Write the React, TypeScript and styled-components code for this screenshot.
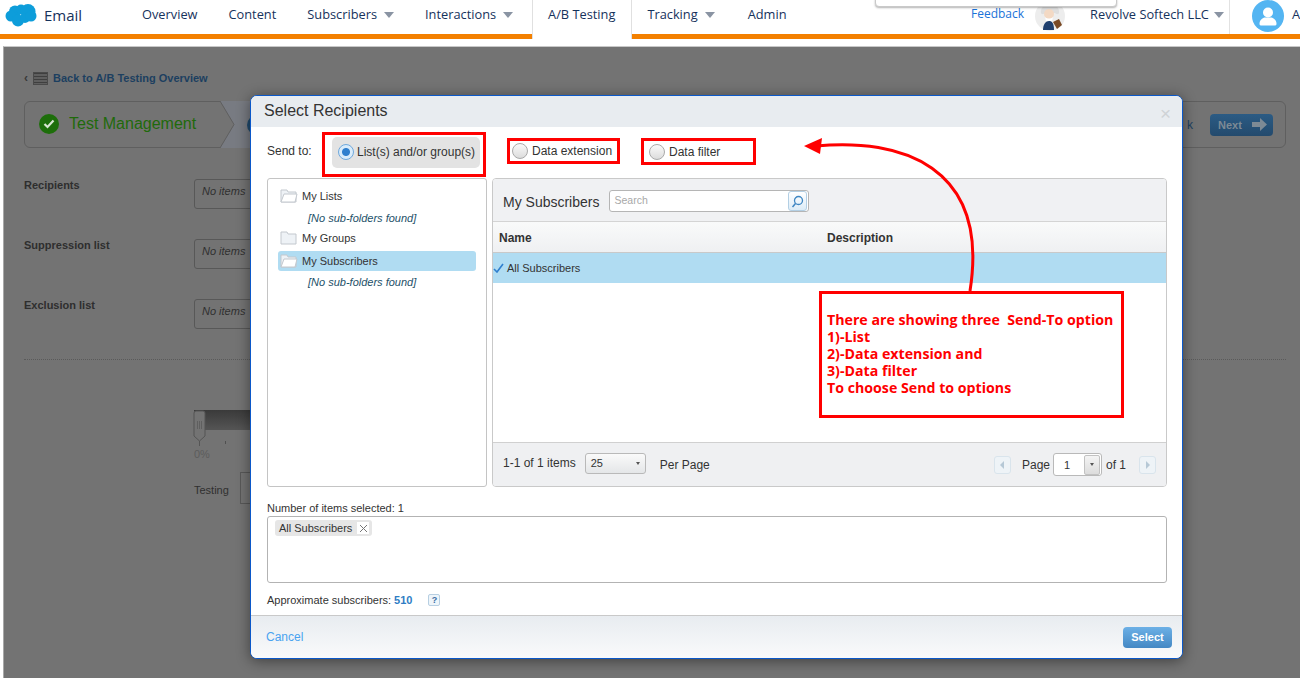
import React from "react";
import styled, { createGlobalStyle } from "styled-components";

const GlobalStyle = createGlobalStyle`
  html, body {
    margin: 0;
    padding: 0;
    background: #fff;
  }
  body {
    font-family: "Liberation Sans", Arial, sans-serif;
    overflow: hidden;
  }
`;

const CloudLogo = () => (
  <svg width="32" height="24" viewBox="0 0 32 24">
    <g fill="#0d9dda">
      <circle cx="10" cy="8.500" r="6" />
      <circle cx="16" cy="6.500" r="5" />
      <circle cx="23" cy="8.500" r="7.500" />
      <circle cx="6" cy="13" r="5.500" />
      <circle cx="13" cy="17.500" r="6" />
      <circle cx="20" cy="15" r="5" />
      <circle cx="26" cy="13" r="5.500" />
    </g>
  </svg>
);

const Einstein = () => (
  <svg width="30" height="30" viewBox="0 0 30 30">
    <circle cx="15" cy="15" r="15" fill="#ededed" />
    <path d="M6 12c-1-6 5-9 9-9s10 3 9 9c-1 2-3 1-4 0H10c-1 1-3 2-4 0z" fill="#dedede" />
    <circle cx="14" cy="13" r="5" fill="#f3d9c4" />
    <path d="M10 16c2 2 6 2 8 0l-1 4h-6z" fill="#fff" />
    <path d="M8 29c0-6 3-9 6-9s5 2 5 9z" fill="#1f3f6e" />
    <path d="M18 21l6-3 3 6-5 4z" fill="#7a4a25" />
  </svg>
);

const UserAvatar = () => (
  <svg width="32" height="32" viewBox="0 0 32 32">
    <circle cx="16" cy="16" r="16" fill="#54b5f2" />
    <circle cx="16" cy="12.500" r="5" fill="#fff" />
    <path d="M7.500 24c0-4 3-6 5-6.500h7c2 .5 5 2.500 5 6.500 0 1-1 1.500-2 1.500H9.500c-1 0-2-.5-2-1.500z" fill="#fff" />
  </svg>
);

const FolderIcon = ({ open }: { open?: boolean }) => (
  <svg width="18" height="14" viewBox="0 0 18 14">
    <path d="M1 1h6l1 2h8v10H1z" fill="#eef2f6" stroke="#c3c8ce" />
    {open && <path d="M1 13l3-8h13l-2 8z" fill="#fff" stroke="#c3c8ce" />}
  </svg>
);

const Page = styled.div`
  position: relative;
  width: 1300px;
  height: 678px;
  overflow: hidden;
  background: #fff;
`;

const NavBar = styled.header`
  position: relative;
  display: flex;
  align-items: flex-start;
  height: 34px;
  border-bottom: 5px solid #f38000;
  background: #fff;
`;

const Brand = styled.div`
  display: flex;
  align-items: center;
  width: 126.500px;
  height: 30px;
  padding-left: 5px;
  box-sizing: border-box;
  gap: 7px;
  font-family: "Open Sans", sans-serif;
  font-size: 15px;
  color: #16325c;
`;

const NavItem = styled.div<{ $active?: boolean }>`
  display: flex;
  align-items: center;
  box-sizing: border-box;
  height: ${({ $active }) => ($active ? "39px" : "27px")};
  padding: 0 15.500px;
  font-family: "Open Sans", sans-serif;
  font-size: 12.8px;
  color: #16325c;
  white-space: nowrap;
  ${({ $active }) =>
    $active &&
    `
    background: #fff;
    border-left: 1px solid #e0e0e0;
    border-right: 1px solid #e0e0e0;
    padding-bottom: 12px;
    margin: 0 0 -5px 3px;
    position: relative;
  `}
`;

const AdminItem = styled(NavItem)`
  margin-left: 2px;
`;

const Caret = styled.span`
  display: inline-block;
  width: 0;
  height: 0;
  margin-left: 7px;
  margin-top: 2px;
  border-left: 5.500px solid transparent;
  border-right: 5.500px solid transparent;
  border-top: 6px solid #8a94a3;
`;

const NavRight = styled.div`
  position: absolute;
  left: 971px;
  right: 0;
  top: 0;
  display: flex;
  align-items: flex-start;
  height: 34px;
`;

const Feedback = styled.a`
  line-height: 28px;
  font-family: "Open Sans", sans-serif;
  font-size: 12px;
  color: #1a72d8;
  margin-right: 11px;
`;

const AvatarSlot = styled.div`
  height: 30px;
  margin-top: 1px;
`;

const Org = styled.div`
  display: flex;
  align-items: center;
  height: 27px;
  margin-left: 25px;
  width: 141px;
  font-family: "Open Sans", sans-serif;
  font-size: 12.8px;
  color: #16325c;
  white-space: nowrap;
`;

const OrgCaret = styled(Caret)`
  margin-left: 5px;
`;

const UserBlock = styled.div`
  display: flex;
  align-items: flex-start;
  gap: 8px;
  height: 34px;
  padding-left: 22px;
  border-left: 1px solid #e2e2e2;
  font-family: "Open Sans", sans-serif;
  font-size: 12.8px;
  color: #16325c;
  line-height: 28px;
`;

const TopPopup = styled.div`
  position: absolute;
  left: 875px;
  top: -4px;
  width: 240px;
  height: 9px;
  background: #fff;
  border: 1px solid #c9c9c9;
  border-radius: 4px;
  box-shadow: 0 1px 2px rgba(0, 0, 0, 0.3);
`;

const Backdrop = styled.main`
  position: absolute;
  left: 3px;
  right: 0;
  top: 46px;
  bottom: 0;
  padding: 24px 14px 0 20px;
  background: #737373;
  border-top: 1px solid #c8c8c8;
  border-left: 1px solid #a8a8a8;
  color: #333;
`;

const BackLink = styled.div`
  display: flex;
  align-items: center;
  gap: 5px;
  height: 14px;
  font-size: 11px;
  font-weight: bold;
  color: #1c3f60;
`;

const Chevron = styled.span`
  width: 4px;
  font-size: 12px;
  color: #3a3a3a;
`;

const ListGlyph = styled.span`
  display: inline-block;
  width: 15px;
  height: 13px;
  background: repeating-linear-gradient(#3f3f3f 0 1px, #5f5f5f 1px 3px);
  border: 1px solid #4a4a4a;
  box-sizing: border-box;
`;

const Steps = styled.div`
  position: relative;
  display: flex;
  align-items: center;
  justify-content: space-between;
  box-sizing: border-box;
  height: 47px;
  margin-top: 16px;
  padding: 0 12px 0 14px;
  border: 1px solid #5f5f5f;
  border-radius: 6px;
`;

const StepDone = styled.div`
  display: flex;
  align-items: center;
  gap: 10px;
  margin-bottom: 1px;
  font-size: 16px;
  color: #1f6a0b;
`;

const DoneMark = styled.span`
  display: flex;
  align-items: center;
  justify-content: center;
  width: 20px;
  height: 20px;
  border-radius: 50%;
  background: #1d6e0a;
`;

const StepArrow = styled.svg`
  position: absolute;
  left: 195px;
  top: -1px;
`;

const NextWrap = styled.div`
  display: flex;
  align-items: center;
  gap: 17px;
  font-size: 12px;
  color: #1c3f60;
`;

const NextButton = styled.div`
  display: flex;
  align-items: center;
  gap: 10px;
  box-sizing: border-box;
  width: 63px;
  height: 22px;
  padding-left: 8px;
  border-radius: 4px;
  background: linear-gradient(#2b5b84, #234a6d);
  color: #7d8a95;
  font-size: 11px;
  font-weight: bold;
`;

const FieldRow = styled.div`
  display: flex;
  align-items: flex-start;
  height: 60px;
`;

const FieldLabel = styled.div`
  width: 170px;
  font-size: 11px;
  font-weight: bold;
  color: #2e2e2e;
`;

const FieldBox = styled.div`
  box-sizing: border-box;
  width: 200px;
  height: 30px;
  padding: 5px 7px;
  border: 1px solid #585858;
  border-radius: 3px;
  font-size: 11px;
  font-style: italic;
  color: #303030;
`;

const Fields = styled.div`
  margin-top: 31px;
`;

const Dotted = styled.div`
  height: 0;
  border-top: 1px dotted #5a5a5a;
`;

const SliderArea = styled.div`
  position: relative;
  margin: 50px 0 0 170px;
  height: 95px;
`;

const SliderTrack = styled.div`
  width: 100px;
  height: 20px;
  margin-top: 3px;
  background: linear-gradient(#3a3a3a, #555);
`;

const SliderHandle = styled.svg`
  position: absolute;
  left: -1px;
  top: 0;
`;

const SliderTick = styled.span`
  position: absolute;
  left: 31px;
  top: 31px;
  width: 1px;
  height: 3px;
  background: #505050;
`;

const ZeroLabel = styled.div`
  margin-top: 18px;
  font-size: 11px;
  color: #5c5c5c;
`;

const TestingRow = styled.div`
  display: flex;
  align-items: center;
  gap: 11px;
  margin-top: 12px;
  font-size: 11px;
  color: #303030;
`;

const TestingLabel = styled.span`
  padding-top: 4px;
`;

const TestingBox = styled.div`
  width: 40px;
  height: 30px;
  border: 1px solid #585858;
`;

const Dialog = styled.section`
  position: absolute;
  left: 250px;
  top: 95px;
  display: flex;
  flex-direction: column;
  box-sizing: border-box;
  width: 933px;
  height: 564px;
  background: #fff;
  border: 1px solid #0b58c9;
  border-radius: 7px;
  box-shadow: 0 2px 14px rgba(0, 0, 0, 0.45);
  overflow: hidden;
  color: #333;
`;

const DialogHead = styled.div`
  display: flex;
  align-items: center;
  justify-content: space-between;
  flex: none;
  box-sizing: border-box;
  height: 31px;
  padding: 0 11px 2px 13px;
  background: #e8ecf0;
  font-size: 16px;
  color: #333;
`;

const CloseX = styled.span`
  margin-top: 6px;
  font-size: 19px;
  color: #cfd3d6;
`;

const SendRow = styled.div`
  display: flex;
  align-items: flex-start;
  flex: none;
  height: 51px;
  padding: 5px 0 0 16px;
  box-sizing: border-box;
`;

const SendLabel = styled.div`
  width: 55px;
  padding-top: 12px;
  line-height: 14px;
  font-size: 12px;
`;

const RedBox = styled.div<{ $w: number; $h: number; $top?: number; $pad?: number }>`
  display: flex;
  align-items: center;
  box-sizing: border-box;
  width: ${({ $w }) => $w}px;
  height: ${({ $h }) => $h}px;
  margin-top: ${({ $top }) => $top || 0}px;
  margin-right: 21px;
  padding-left: ${({ $pad }) => $pad || 0}px;
  border: 3px solid #f00;
`;

const ActiveOption = styled.div`
  position: relative;
  display: flex;
  align-items: center;
  gap: 3px;
  box-sizing: border-box;
  width: 148px;
  height: 31px;
  margin-left: 7px;
  margin-top: -4px;
  padding: 0 0 2px 6px;
  border-radius: 5px;
  background: #e3e3e3;
  font-size: 12px;
  white-space: nowrap;
  &::after {
    content: "";
    position: absolute;
    left: 68px;
    bottom: -4px;
    width: 8px;
    height: 8px;
    background: #e9e9e9;
    transform: rotate(45deg);
    z-index: -1;
  }
`;

const PlainOption = styled.div`
  display: flex;
  align-items: center;
  gap: 4px;
  font-size: 12px;
  white-space: nowrap;
`;

const Radio = styled.span<{ $on?: boolean }>`
  display: inline-block;
  box-sizing: border-box;
  width: 16px;
  height: 16px;
  border-radius: 50%;
  border: 1px solid ${({ $on }) => ($on ? "#6fa9dd" : "#a9a9a9")};
  background: ${({ $on }) =>
    $on
      ? "radial-gradient(circle, #2f7fce 0 3.5px, #d9ecfb 4.5px)"
      : "linear-gradient(#fafafa, #dcdcdc)"};
`;

const Panels = styled.div`
  display: flex;
  flex: none;
  gap: 5px;
  height: 309px;
  padding: 0 15px 0 16px;
`;

const Tree = styled.div`
  display: flex;
  flex-direction: column;
  flex: none;
  box-sizing: border-box;
  width: 220px;
  padding: 7px 10px 0 10px;
  border: 1px solid #c4c4c4;
  border-radius: 3px;
`;

const TreeRow = styled.div<{ $selected?: boolean; $gap?: number }>`
  display: flex;
  align-items: center;
  gap: 4px;
  flex: none;
  height: 20px;
  margin-top: ${({ $gap }) => $gap || 0}px;
  padding-left: 2px;
  border-radius: 3px;
  background: ${({ $selected }) => ($selected ? "#b0dcf2" : "transparent")};
  font-size: 11px;
  color: #333;
`;

const TreeEmpty = styled.div<{ $gap?: number }>`
  flex: none;
  height: 20px;
  line-height: 20px;
  margin-top: ${({ $gap }) => $gap || 0}px;
  padding-left: 30px;
  font-size: 11px;
  font-style: italic;
  color: #1c5068;
`;

const GridPanel = styled.div`
  display: flex;
  flex-direction: column;
  flex: 1;
  border: 1px solid #c9c9c9;
  border-radius: 4px;
  overflow: hidden;
`;

const GridTools = styled.div`
  display: flex;
  align-items: center;
  gap: 10px;
  flex: none;
  height: 43px;
  padding: 2px 0 0 10px;
  box-sizing: border-box;
  border-bottom: 1px solid #d4d4d4;
  background: #f0f1f3;
  font-size: 14px;
`;

const GridTitle = styled.span`
  padding-top: 2px;
`;

const SearchBox = styled.div`
  display: flex;
  align-items: center;
  justify-content: space-between;
  box-sizing: border-box;
  width: 200px;
  height: 22px;
  padding: 0 1px 0 4px;
  background: #fff;
  border: 1px solid #b5b5b5;
  border-radius: 3px;
  font-size: 10.5px;
  color: #a8a8a8;
`;

const SearchHint = styled.span`
  margin-top: -2px;
`;

const SearchButton = styled.span`
  display: flex;
  align-items: center;
  justify-content: center;
  width: 17px;
  height: 18px;
  border: 1px solid #b3cfe4;
  border-radius: 3px;
  background: linear-gradient(#fff, #dcecf7);
`;

const GridHead = styled.div`
  display: flex;
  align-items: center;
  flex: none;
  box-sizing: border-box;
  height: 31px;
  padding: 1px 0 0 6px;
  border-bottom: 1px solid #c9c9c9;
  background: linear-gradient(#f9fafa, #eff0f2);
  font-size: 12px;
  font-weight: bold;
`;

const NameColumn = styled.div`
  width: 328px;
`;

const GridSelected = styled.div`
  display: flex;
  align-items: center;
  gap: 3px;
  flex: none;
  height: 30px;
  background: #b0dcf2;
  font-size: 11px;
`;

const GridSpace = styled.div`
  flex: 1;
`;

const GridFoot = styled.div`
  display: flex;
  align-items: center;
  flex: none;
  box-sizing: border-box;
  height: 44px;
  padding: 0 10px;
  border-top: 1px solid #d0d0d0;
  background: #eff0f2;
  font-size: 12px;
`;

const ItemCount = styled.span`
  margin-bottom: 3px;
`;

const PerPage = styled.div`
  display: flex;
  align-items: center;
  justify-content: space-between;
  box-sizing: border-box;
  width: 61px;
  height: 21px;
  margin: 0 14px 3px 9px;
  padding: 0 5px;
  border: 1px solid #b9b9b9;
  border-radius: 3px;
  background: linear-gradient(#fafafa, #e4e6e8);
  font-size: 11px;
`;

const MiniCaret = styled.span`
  display: inline-block;
  width: 0;
  height: 0;
  border-left: 2.500px solid transparent;
  border-right: 2.500px solid transparent;
  border-top: 3px solid #555;
`;

const Pager = styled.div`
  display: flex;
  align-items: center;
  margin-left: auto;
`;

const PageArrow = styled.span<{ $dir: "left" | "right" }>`
  display: flex;
  align-items: center;
  justify-content: center;
  box-sizing: border-box;
  width: 17px;
  height: 18px;
  border: 1px solid #d9e4ec;
  border-radius: 3px;
  background: #eef3f7;
  &::before {
    content: "";
    border-top: 4px solid transparent;
    border-bottom: 4px solid transparent;
    ${({ $dir }) =>
      $dir === "left" ? "border-right: 4px solid #b6c8d6;" : "border-left: 4px solid #b6c8d6;"}
  }
`;

const PageLabel = styled.span`
  margin: 0 3px 0 11px;
`;

const PageInput = styled.div`
  display: flex;
  align-items: center;
  justify-content: space-between;
  box-sizing: border-box;
  width: 49px;
  height: 23px;
  padding: 0 1px 0 10px;
  border: 1px solid #b9b9b9;
  border-radius: 3px;
  background: #fff;
  font-size: 11px;
`;

const PageDrop = styled.span`
  display: flex;
  align-items: center;
  justify-content: center;
  width: 14px;
  height: 18px;
  border: 1px solid #c2c2c2;
  border-radius: 2px;
  background: linear-gradient(#f4f4f4, #dcdcdc);
`;

const PageOf = styled.span`
  margin: 0 13px 0 4px;
`;

const SelectedLabel = styled.div`
  flex: none;
  margin: 15px 0 0 16px;
  line-height: 13px;
  font-size: 11px;
`;

const SelectedBox = styled.div`
  display: flex;
  align-items: flex-start;
  flex: none;
  box-sizing: border-box;
  height: 67px;
  margin: 1px 15px 0 16px;
  padding: 3px 7px;
  border: 1px solid #b3b3b3;
  border-radius: 3px;
`;

const Chip = styled.div`
  display: flex;
  align-items: center;
  gap: 5px;
  height: 16px;
  padding: 0 3px 0 4px;
  border-radius: 3px;
  background: #e6e6e6;
  font-size: 11px;
`;

const ChipClose = styled.span`
  display: flex;
  align-items: center;
  justify-content: center;
  width: 12px;
  height: 12px;
  background: #fff;
`;

const ApproxRow = styled.div`
  display: flex;
  align-items: center;
  flex: none;
  height: 16px;
  margin: 9px 0 0 16px;
  font-size: 11px;
`;

const ApproxCount = styled.strong`
  margin: 0 16px 0 3px;
  color: #2e7dc4;
`;

const HelpMark = styled.span`
  display: flex;
  align-items: center;
  justify-content: center;
  box-sizing: border-box;
  width: 12px;
  height: 12px;
  border: 1px solid #b7cfe2;
  border-radius: 2px;
  background: #eef5fa;
  font-size: 9px;
  font-weight: bold;
  color: #3a6ea5;
`;

const DialogFoot = styled.div`
  display: flex;
  align-items: center;
  justify-content: space-between;
  margin-top: auto;
  box-sizing: border-box;
  height: 43px;
  padding: 0 10px 0 15px;
  border-top: 1px solid #c9c9c9;
  background: linear-gradient(#e8ecf0, #f9fafb);
`;

const CancelLink = styled.a`
  font-size: 12px;
  color: #4aa3f0;
`;

const SelectButton = styled.div`
  display: flex;
  align-items: center;
  justify-content: center;
  width: 49px;
  height: 21px;
  border-radius: 4px;
  background: linear-gradient(#6cb0e6, #4488c4);
  font-size: 11px;
  font-weight: bold;
  color: #fff;
`;

const Callout = styled.div`
  position: absolute;
  left: 819px;
  top: 291px;
  box-sizing: border-box;
  width: 305px;
  height: 127px;
  padding: 17px 0 0 5px;
  border: 3px solid #f00;
  background: #fff;
  font-family: "Open Sans", sans-serif;
  font-size: 14.2px;
  font-weight: 700;
  line-height: 17px;
  color: #f00;
  white-space: pre;
`;

const ArrowOverlay = styled.svg`
  position: absolute;
  left: 790px;
  top: 130px;
  pointer-events: none;
`;

const App = () => {
  return (
    <Page>
      <GlobalStyle />
      <NavBar>
        <Brand>
          <CloudLogo />
          Email
        </Brand>
        <NavItem>Overview</NavItem>
        <NavItem>Content</NavItem>
        <NavItem>
          Subscribers
          <Caret />
        </NavItem>
        <NavItem>
          Interactions
          <Caret />
        </NavItem>
        <NavItem $active>A/B Testing</NavItem>
        <NavItem>
          Tracking
          <Caret />
        </NavItem>
        <AdminItem>Admin</AdminItem>
        <NavRight>
          <Feedback>Feedback</Feedback>
          <AvatarSlot>
            <Einstein />
          </AvatarSlot>
          <Org>
            Revolve Softech LLC
            <OrgCaret />
          </Org>
          <UserBlock>
            <UserAvatar />A
          </UserBlock>
        </NavRight>
        <TopPopup />
      </NavBar>

      <Backdrop>
        <BackLink>
          <Chevron>‹</Chevron>
          <ListGlyph />
          Back to A/B Testing Overview
        </BackLink>
        <Steps>
          <StepDone>
            <DoneMark>
              <svg width="12" height="10" viewBox="0 0 12 10">
                <path d="M1.500 5l3 3 6-6.500" fill="none" stroke="#d8e6d2" strokeWidth="2.200" />
              </svg>
            </DoneMark>
            Test Management
          </StepDone>
          <StepArrow width="60" height="47" viewBox="0 0 60 47">
            <path d="M0 0h60v47H0l14-23.500z" fill="#787b82" />
            <path d="M0 0l14 23.500L0 47" fill="none" stroke="#5f5f5f" />
            <circle cx="37" cy="24" r="10" fill="#1f4a6e" />
          </StepArrow>
          <NextWrap>
            <span>k</span>
            <NextButton>
              Next
              <svg width="15" height="13" viewBox="0 0 15 13">
                <path d="M0 4h8V0l7 6.500L8 13V9H0z" fill="#7d8a95" />
              </svg>
            </NextButton>
          </NextWrap>
        </Steps>
        <Fields>
          <FieldRow>
            <FieldLabel>Recipients</FieldLabel>
            <FieldBox>No items</FieldBox>
          </FieldRow>
          <FieldRow>
            <FieldLabel>Suppression list</FieldLabel>
            <FieldBox>No items</FieldBox>
          </FieldRow>
          <FieldRow>
            <FieldLabel>Exclusion list</FieldLabel>
            <FieldBox>No items</FieldBox>
          </FieldRow>
        </Fields>
        <Dotted />
        <SliderArea>
          <SliderTrack />
          <SliderHandle width="14" height="36" viewBox="0 0 14 36">
            <path d="M1 3q0-2 2-2h7q2 0 2 2v23l-5.500 5L1 26z" fill="#737373" stroke="#555" />
            <path d="M6.500 31v5" stroke="#555" />
            <path d="M4 12h6M4 14h6M4 16h6M4 18h6" stroke="#4d4d4d" strokeDasharray="1 1" />
          </SliderHandle>
          <SliderTick />
          <ZeroLabel>0%</ZeroLabel>
          <TestingRow>
            <TestingLabel>Testing</TestingLabel>
            <TestingBox />
          </TestingRow>
        </SliderArea>
      </Backdrop>

      <Dialog>
        <DialogHead>
          Select Recipients
          <CloseX>×</CloseX>
        </DialogHead>
        <SendRow>
          <SendLabel>Send to:</SendLabel>
          <RedBox $w={164} $h={45}>
            <ActiveOption>
              <Radio $on />
              List(s) and/or group(s)
            </ActiveOption>
          </RedBox>
          <RedBox $w={113} $h={26} $top={6} $pad={2}>
            <PlainOption>
              <Radio />
              Data extension
            </PlainOption>
          </RedBox>
          <RedBox $w={115} $h={27} $top={6} $pad={5}>
            <PlainOption>
              <Radio />
              Data filter
            </PlainOption>
          </RedBox>
        </SendRow>
        <Panels>
          <Tree>
            <TreeRow>
              <FolderIcon open />
              My Lists
            </TreeRow>
            <TreeEmpty $gap={2}>[No sub-folders found]</TreeEmpty>
            <TreeRow>
              <FolderIcon />
              My Groups
            </TreeRow>
            <TreeRow $selected $gap={3}>
              <FolderIcon open />
              My Subscribers
            </TreeRow>
            <TreeEmpty $gap={1}>[No sub-folders found]</TreeEmpty>
          </Tree>
          <GridPanel>
            <GridTools>
              <GridTitle>My Subscribers</GridTitle>
              <SearchBox>
                <SearchHint>Search</SearchHint>
                <SearchButton>
                  <svg width="13" height="13" viewBox="0 0 13 13">
                    <circle cx="7.500" cy="5.500" r="4" fill="none" stroke="#3f86c2" strokeWidth="1.300" />
                    <path d="M4.500 8.500L1.500 12" stroke="#3f86c2" strokeWidth="1.500" />
                  </svg>
                </SearchButton>
              </SearchBox>
            </GridTools>
            <GridHead>
              <NameColumn>Name</NameColumn>
              Description
            </GridHead>
            <GridSelected>
              <svg width="11" height="10" viewBox="0 0 11 10">
                <path d="M1 6l3 3 6-8" fill="none" stroke="#2f7fce" strokeWidth="1.600" />
              </svg>
              All Subscribers
            </GridSelected>
            <GridSpace />
            <GridFoot>
              <ItemCount>1-1 of 1 items</ItemCount>
              <PerPage>
                25
                <MiniCaret />
              </PerPage>
              Per Page
              <Pager>
                <PageArrow $dir="left" />
                <PageLabel>Page</PageLabel>
                <PageInput>
                  1
                  <PageDrop>
                    <MiniCaret />
                  </PageDrop>
                </PageInput>
                <PageOf>of 1</PageOf>
                <PageArrow $dir="right" />
              </Pager>
            </GridFoot>
          </GridPanel>
        </Panels>
        <SelectedLabel>Number of items selected: 1</SelectedLabel>
        <SelectedBox>
          <Chip>
            All Subscribers
            <ChipClose>
              <svg width="9" height="9" viewBox="0 0 9 9">
                <path d="M1 1l7 7M8 1L1 8" stroke="#777" />
              </svg>
            </ChipClose>
          </Chip>
        </SelectedBox>
        <ApproxRow>
          Approximate subscribers:
          <ApproxCount>510</ApproxCount>
          <HelpMark>?</HelpMark>
        </ApproxRow>
        <DialogFoot>
          <CancelLink>Cancel</CancelLink>
          <SelectButton>Select</SelectButton>
        </DialogFoot>
      </Dialog>

      <ArrowOverlay width="200" height="170" viewBox="0 0 200 170">
        <path d="M26 16C110 8 200 35 180 161" fill="none" stroke="#f00" strokeWidth="3" />
        <path d="M14 16L32 8l-2 16z" fill="#f00" />
      </ArrowOverlay>
      <Callout>
        {"There are showing three  Send-To option\n1)-List\n2)-Data extension and\n3)-Data filter\nTo choose Send to options"}
      </Callout>
    </Page>
  );
};

export default App;
